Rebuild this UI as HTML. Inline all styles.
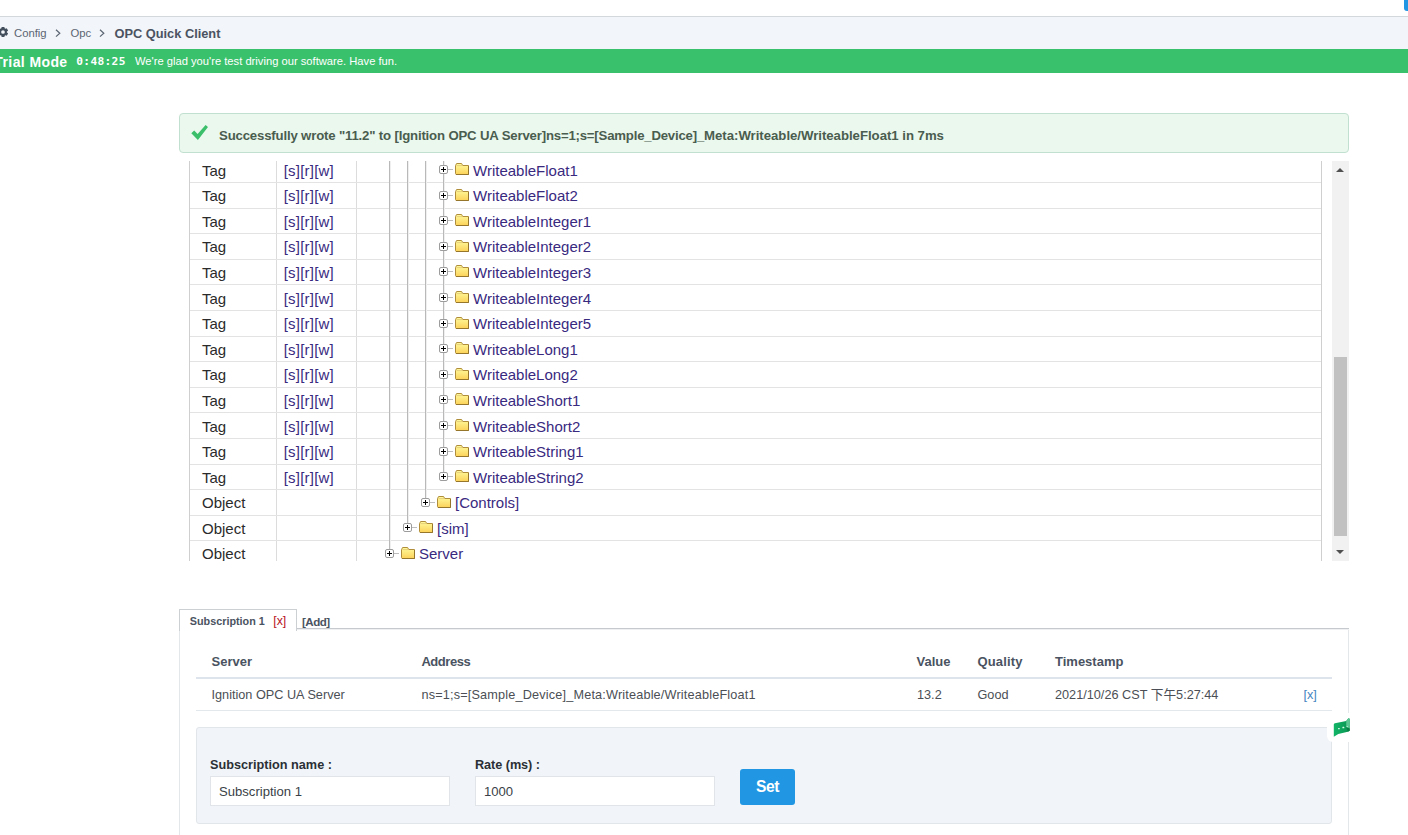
<!DOCTYPE html>
<html lang="en">
<head>
<meta charset="utf-8">
<title>OPC Quick Client</title>
<style>
html,body{margin:0;padding:0;background:#fff;}
body{width:1408px;height:835px;overflow:hidden;position:relative;font-family:"Liberation Sans","Noto Sans CJK SC",sans-serif;color:#323a45;}
.abs{position:absolute;white-space:nowrap;}
/* top */
#topline{left:0;top:16px;width:1408px;height:1px;background:#d3d8dd;}
#crumbs{left:0;top:17px;width:1408px;height:32px;background:#f2f5f9;}
#corner{left:1404px;top:0;width:6px;height:11px;background:#2196e3;border-radius:0 0 0 3px;}
#trial{left:0;top:48.5px;width:1408px;height:24.5px;background:#3ac16c;}
.crumb{font-size:11.3px;color:#5b6573;top:25.8px;line-height:14px;}
.crumbb{font-size:12.8px;font-weight:bold;color:#4b5362;top:25.5px;line-height:16px;}
.sep{top:28.2px;width:6px;height:10px;}
/* alert */
#alert{left:179px;top:113px;width:1168px;height:38px;background:#eaf8ee;border:1px solid #c2e0cf;border-radius:4px;}
#alerttxt{left:219px;top:127.8px;font-size:13.2px;letter-spacing:-.12px;font-weight:bold;color:#4a5d4f;line-height:16px;}
/* tree */
#tree{left:189px;top:161px;width:1133px;height:400px;overflow:hidden;border-left:1px solid #cfcfcf;border-right:1px solid #cfcfcf;box-sizing:border-box;}
.row{position:absolute;left:0;width:1131px;height:24px;border-bottom:1px solid #e3e3e3;}
.row span{position:absolute;top:4px;font-size:15px;line-height:18px;white-space:nowrap;}
.up span{top:3px;}
.c1{left:12px;color:#2b2b2b;}
.c2{left:93.7px;color:#392a80;letter-spacing:.22px;}
.c3{color:#392a80;}
.pb{position:absolute;top:7px;width:7px;height:7px;border:1px solid #9c9c9c;border-radius:2px;background:#fff;z-index:2;}
.pb:before{content:"";position:absolute;left:1px;top:3px;width:5px;height:1px;background:#000;}
.pb:after{content:"";position:absolute;left:3px;top:1px;width:1px;height:5px;background:#000;}
.hd{position:absolute;top:11px;width:5px;height:1px;background:#bdbdbd;}
.fo{position:absolute;top:4px;}
.vl{position:absolute;top:0;width:1px;background:#b9b9b9;box-shadow:1px 0 0 #efefef;}
.cs{position:absolute;top:0;width:1px;height:400px;background:#dcdcdc;}
#sbar{left:1332px;top:161px;width:17px;height:400px;background:#f1f1f1;}
#thumb{left:1334px;top:357px;width:13px;height:179px;background:#c1c1c1;}
.arr{width:0;height:0;border-left:4px solid transparent;border-right:4px solid transparent;}
/* subscriptions */
#tab{left:179px;top:609px;width:116px;height:21px;border:1px solid #cdd0d3;border-bottom:none;background:#fff;}
#tabline{left:296px;top:628px;width:1053px;height:1px;background:#c6c9cd;box-shadow:0 1px 0 #eef0f1;}
#subbox{left:179px;top:630px;width:1168px;height:210px;border-left:1px solid #e4e7ea;border-right:1px solid #e4e7ea;}
.th{font-size:13px;font-weight:bold;color:#4a5361;top:653.8px;line-height:16px;}
.td{font-size:12.7px;color:#4b4f55;top:686.8px;line-height:16px;}
#hline{left:196px;top:677px;width:1136px;height:2px;background:#dde4eb;}
#rline{left:196px;top:710px;width:1136px;height:1px;background:#e3e8ed;}
#panel{left:196px;top:727px;width:1134px;height:95px;background:#f1f5f9;border:1px solid #e1e6ea;border-radius:3px;}
.lbl{font-size:12.7px;font-weight:bold;color:#2b2f36;top:757.4px;line-height:16px;}
.inp{top:776px;height:28px;width:238px;background:#fff;border:1px solid #e1e5e9;font-size:13.1px;color:#3a3f47;line-height:30.2px;text-indent:8px;}
#setbtn{left:740px;top:769px;width:55px;height:35.5px;background:#2196e3;border-radius:3px;color:#fff;font-weight:bold;font-size:15.6px;letter-spacing:-.5px;text-align:center;line-height:36px;}
</style>
</head>
<body>
<div class="abs" id="topline"></div>
<div class="abs" id="crumbs"></div>
<div class="abs" id="corner"></div>
<div class="abs" id="trial"></div>
<!--CRUMBS-->
<svg class="abs" style="left:-3px;top:25.900px" width="12" height="12" viewBox="-6 -6 12 12"><g fill="#434e5c"><circle r="3.900"/><rect x="-1.500" y="-5.100" width="3" height="10.200" rx=".5"/><rect x="-1.500" y="-5.100" width="3" height="10.200" rx=".5" transform="rotate(60)"/><rect x="-1.500" y="-5.100" width="3" height="10.200" rx=".5" transform="rotate(120)"/></g><circle r="1.850" fill="#f2f5f9"/></svg>
<div class="abs crumb" style="left:14px">Config</div>
<svg class="abs sep" style="left:55px" viewBox="0 0 6 10"><path d="M1 1.800l3.800 3.400-3.800 3.400" fill="none" stroke="#5b6573" stroke-width="1.200"/></svg>
<div class="abs crumb" style="left:70.500px">Opc</div>
<svg class="abs sep" style="left:99px" viewBox="0 0 6 10"><path d="M1 1.800l3.800 3.400-3.800 3.400" fill="none" stroke="#5b6573" stroke-width="1.200"/></svg>
<div class="abs crumbb" style="left:114.500px">OPC Quick Client</div>
<div class="abs" id="tm1" style="left:-5.700px;top:53px;font-size:14px;letter-spacing:.4px;font-weight:bold;color:#fff;line-height:18px">Trial Mode</div>
<div class="abs" id="tm2" style="left:76.300px;top:54.500px;font-family:'DejaVu Sans Mono','Liberation Mono',monospace;font-size:11.200px;letter-spacing:.33px;font-weight:bold;color:#fff;line-height:14px">0:48:25</div>
<div class="abs" id="tm3" style="left:135px;top:54px;font-size:11.200px;color:#fff;line-height:14px">We're glad you're test driving our software. Have fun.</div>
<!--/CRUMBS-->
<!--ALERT-->
<div class="abs" id="alert"></div>
<svg class="abs" style="left:190px;top:124px" width="19" height="17" viewBox="0 0 19 17"><path d="M1.300 9.200L4.200 6.600 7.600 10 15.600 1 18 2.900 7.900 16z" fill="#3bbf6a"/></svg>
<div class="abs" id="alerttxt"><span style="letter-spacing:-.17px">Successfully wrote "11.2" to [Ignition OPC UA Server]</span><span style="letter-spacing:-.2px">ns=1;s=[Sample_Device]_</span><span style="letter-spacing:-.02px">Meta:Writeable/WriteableFloat1 in 7ms</span></div>
<!--/ALERT-->
<!--TREE-->
<div class="abs" id="tree">
<div class="cs" style="left:86px"></div>
<div class="cs" style="left:166px"></div>
<div class="row" style="top:-3px"><span class="c1">Tag</span><span class="c2">[s][r][w]</span><i class="pb" style="left:249px"></i><i class="hd" style="left:258px"></i><svg class="fo" style="left:264px" width="16" height="14" viewBox="0 0 16 14"><defs><linearGradient id="g0" x1="0" y1="0" x2="0" y2="1"><stop offset="0" stop-color="#fffb9e"/><stop offset="1" stop-color="#fcd259"/></linearGradient></defs><path d="M1.5 11.6V3.6L2.6 1.5H7.6L8.7 3.5H14.5V12.5H2z" fill="url(#g0)" stroke="#b08d3a" stroke-width="1" stroke-linejoin="round"/><path d="M2.4 3.6H8.4" stroke="#e6cf7a" stroke-width="1" fill="none"/><path d="M14.5 4V12.5H2" stroke="#96762a" stroke-width="1" fill="none" stroke-linejoin="round"/></svg><span class="c3" style="left:283px">WriteableFloat1</span></div>
<div class="row up" style="top:23px"><span class="c1">Tag</span><span class="c2">[s][r][w]</span><i class="pb" style="left:249px"></i><i class="hd" style="left:258px"></i><svg class="fo" style="left:264px" width="16" height="14" viewBox="0 0 16 14"><defs><linearGradient id="g1" x1="0" y1="0" x2="0" y2="1"><stop offset="0" stop-color="#fffb9e"/><stop offset="1" stop-color="#fcd259"/></linearGradient></defs><path d="M1.5 11.6V3.6L2.6 1.5H7.6L8.7 3.5H14.5V12.5H2z" fill="url(#g1)" stroke="#b08d3a" stroke-width="1" stroke-linejoin="round"/><path d="M2.4 3.6H8.4" stroke="#e6cf7a" stroke-width="1" fill="none"/><path d="M14.5 4V12.5H2" stroke="#96762a" stroke-width="1" fill="none" stroke-linejoin="round"/></svg><span class="c3" style="left:283px">WriteableFloat2</span></div>
<div class="row" style="top:48px"><span class="c1">Tag</span><span class="c2">[s][r][w]</span><i class="pb" style="left:249px"></i><i class="hd" style="left:258px"></i><svg class="fo" style="left:264px" width="16" height="14" viewBox="0 0 16 14"><defs><linearGradient id="g2" x1="0" y1="0" x2="0" y2="1"><stop offset="0" stop-color="#fffb9e"/><stop offset="1" stop-color="#fcd259"/></linearGradient></defs><path d="M1.5 11.6V3.6L2.6 1.5H7.6L8.7 3.5H14.5V12.5H2z" fill="url(#g2)" stroke="#b08d3a" stroke-width="1" stroke-linejoin="round"/><path d="M2.4 3.6H8.4" stroke="#e6cf7a" stroke-width="1" fill="none"/><path d="M14.5 4V12.5H2" stroke="#96762a" stroke-width="1" fill="none" stroke-linejoin="round"/></svg><span class="c3" style="left:283px">WriteableInteger1</span></div>
<div class="row up" style="top:74px"><span class="c1">Tag</span><span class="c2">[s][r][w]</span><i class="pb" style="left:249px"></i><i class="hd" style="left:258px"></i><svg class="fo" style="left:264px" width="16" height="14" viewBox="0 0 16 14"><defs><linearGradient id="g3" x1="0" y1="0" x2="0" y2="1"><stop offset="0" stop-color="#fffb9e"/><stop offset="1" stop-color="#fcd259"/></linearGradient></defs><path d="M1.5 11.6V3.6L2.6 1.5H7.6L8.7 3.5H14.5V12.5H2z" fill="url(#g3)" stroke="#b08d3a" stroke-width="1" stroke-linejoin="round"/><path d="M2.4 3.6H8.4" stroke="#e6cf7a" stroke-width="1" fill="none"/><path d="M14.5 4V12.5H2" stroke="#96762a" stroke-width="1" fill="none" stroke-linejoin="round"/></svg><span class="c3" style="left:283px">WriteableInteger2</span></div>
<div class="row" style="top:99px"><span class="c1">Tag</span><span class="c2">[s][r][w]</span><i class="pb" style="left:249px"></i><i class="hd" style="left:258px"></i><svg class="fo" style="left:264px" width="16" height="14" viewBox="0 0 16 14"><defs><linearGradient id="g4" x1="0" y1="0" x2="0" y2="1"><stop offset="0" stop-color="#fffb9e"/><stop offset="1" stop-color="#fcd259"/></linearGradient></defs><path d="M1.5 11.6V3.6L2.6 1.5H7.6L8.7 3.5H14.5V12.5H2z" fill="url(#g4)" stroke="#b08d3a" stroke-width="1" stroke-linejoin="round"/><path d="M2.4 3.6H8.4" stroke="#e6cf7a" stroke-width="1" fill="none"/><path d="M14.5 4V12.5H2" stroke="#96762a" stroke-width="1" fill="none" stroke-linejoin="round"/></svg><span class="c3" style="left:283px">WriteableInteger3</span></div>
<div class="row" style="top:125px"><span class="c1">Tag</span><span class="c2">[s][r][w]</span><i class="pb" style="left:249px"></i><i class="hd" style="left:258px"></i><svg class="fo" style="left:264px" width="16" height="14" viewBox="0 0 16 14"><defs><linearGradient id="g5" x1="0" y1="0" x2="0" y2="1"><stop offset="0" stop-color="#fffb9e"/><stop offset="1" stop-color="#fcd259"/></linearGradient></defs><path d="M1.5 11.6V3.6L2.6 1.5H7.6L8.7 3.5H14.5V12.5H2z" fill="url(#g5)" stroke="#b08d3a" stroke-width="1" stroke-linejoin="round"/><path d="M2.4 3.6H8.4" stroke="#e6cf7a" stroke-width="1" fill="none"/><path d="M14.5 4V12.5H2" stroke="#96762a" stroke-width="1" fill="none" stroke-linejoin="round"/></svg><span class="c3" style="left:283px">WriteableInteger4</span></div>
<div class="row up" style="top:151px"><span class="c1">Tag</span><span class="c2">[s][r][w]</span><i class="pb" style="left:249px"></i><i class="hd" style="left:258px"></i><svg class="fo" style="left:264px" width="16" height="14" viewBox="0 0 16 14"><defs><linearGradient id="g6" x1="0" y1="0" x2="0" y2="1"><stop offset="0" stop-color="#fffb9e"/><stop offset="1" stop-color="#fcd259"/></linearGradient></defs><path d="M1.5 11.6V3.6L2.6 1.5H7.6L8.7 3.5H14.5V12.5H2z" fill="url(#g6)" stroke="#b08d3a" stroke-width="1" stroke-linejoin="round"/><path d="M2.4 3.6H8.4" stroke="#e6cf7a" stroke-width="1" fill="none"/><path d="M14.5 4V12.5H2" stroke="#96762a" stroke-width="1" fill="none" stroke-linejoin="round"/></svg><span class="c3" style="left:283px">WriteableInteger5</span></div>
<div class="row" style="top:176px"><span class="c1">Tag</span><span class="c2">[s][r][w]</span><i class="pb" style="left:249px"></i><i class="hd" style="left:258px"></i><svg class="fo" style="left:264px" width="16" height="14" viewBox="0 0 16 14"><defs><linearGradient id="g7" x1="0" y1="0" x2="0" y2="1"><stop offset="0" stop-color="#fffb9e"/><stop offset="1" stop-color="#fcd259"/></linearGradient></defs><path d="M1.5 11.6V3.6L2.6 1.5H7.6L8.7 3.5H14.5V12.5H2z" fill="url(#g7)" stroke="#b08d3a" stroke-width="1" stroke-linejoin="round"/><path d="M2.4 3.6H8.4" stroke="#e6cf7a" stroke-width="1" fill="none"/><path d="M14.5 4V12.5H2" stroke="#96762a" stroke-width="1" fill="none" stroke-linejoin="round"/></svg><span class="c3" style="left:283px">WriteableLong1</span></div>
<div class="row up" style="top:202px"><span class="c1">Tag</span><span class="c2">[s][r][w]</span><i class="pb" style="left:249px"></i><i class="hd" style="left:258px"></i><svg class="fo" style="left:264px" width="16" height="14" viewBox="0 0 16 14"><defs><linearGradient id="g8" x1="0" y1="0" x2="0" y2="1"><stop offset="0" stop-color="#fffb9e"/><stop offset="1" stop-color="#fcd259"/></linearGradient></defs><path d="M1.5 11.6V3.6L2.6 1.5H7.6L8.7 3.5H14.5V12.5H2z" fill="url(#g8)" stroke="#b08d3a" stroke-width="1" stroke-linejoin="round"/><path d="M2.4 3.6H8.4" stroke="#e6cf7a" stroke-width="1" fill="none"/><path d="M14.5 4V12.5H2" stroke="#96762a" stroke-width="1" fill="none" stroke-linejoin="round"/></svg><span class="c3" style="left:283px">WriteableLong2</span></div>
<div class="row" style="top:227px"><span class="c1">Tag</span><span class="c2">[s][r][w]</span><i class="pb" style="left:249px"></i><i class="hd" style="left:258px"></i><svg class="fo" style="left:264px" width="16" height="14" viewBox="0 0 16 14"><defs><linearGradient id="g9" x1="0" y1="0" x2="0" y2="1"><stop offset="0" stop-color="#fffb9e"/><stop offset="1" stop-color="#fcd259"/></linearGradient></defs><path d="M1.5 11.6V3.6L2.6 1.5H7.6L8.7 3.5H14.5V12.5H2z" fill="url(#g9)" stroke="#b08d3a" stroke-width="1" stroke-linejoin="round"/><path d="M2.4 3.6H8.4" stroke="#e6cf7a" stroke-width="1" fill="none"/><path d="M14.5 4V12.5H2" stroke="#96762a" stroke-width="1" fill="none" stroke-linejoin="round"/></svg><span class="c3" style="left:283px">WriteableShort1</span></div>
<div class="row" style="top:253px"><span class="c1">Tag</span><span class="c2">[s][r][w]</span><i class="pb" style="left:249px"></i><i class="hd" style="left:258px"></i><svg class="fo" style="left:264px" width="16" height="14" viewBox="0 0 16 14"><defs><linearGradient id="g10" x1="0" y1="0" x2="0" y2="1"><stop offset="0" stop-color="#fffb9e"/><stop offset="1" stop-color="#fcd259"/></linearGradient></defs><path d="M1.5 11.6V3.6L2.6 1.5H7.6L8.7 3.5H14.5V12.5H2z" fill="url(#g10)" stroke="#b08d3a" stroke-width="1" stroke-linejoin="round"/><path d="M2.4 3.6H8.4" stroke="#e6cf7a" stroke-width="1" fill="none"/><path d="M14.5 4V12.5H2" stroke="#96762a" stroke-width="1" fill="none" stroke-linejoin="round"/></svg><span class="c3" style="left:283px">WriteableShort2</span></div>
<div class="row up" style="top:279px"><span class="c1">Tag</span><span class="c2">[s][r][w]</span><i class="pb" style="left:249px"></i><i class="hd" style="left:258px"></i><svg class="fo" style="left:264px" width="16" height="14" viewBox="0 0 16 14"><defs><linearGradient id="g11" x1="0" y1="0" x2="0" y2="1"><stop offset="0" stop-color="#fffb9e"/><stop offset="1" stop-color="#fcd259"/></linearGradient></defs><path d="M1.5 11.6V3.6L2.6 1.5H7.6L8.7 3.5H14.5V12.5H2z" fill="url(#g11)" stroke="#b08d3a" stroke-width="1" stroke-linejoin="round"/><path d="M2.4 3.6H8.4" stroke="#e6cf7a" stroke-width="1" fill="none"/><path d="M14.5 4V12.5H2" stroke="#96762a" stroke-width="1" fill="none" stroke-linejoin="round"/></svg><span class="c3" style="left:283px">WriteableString1</span></div>
<div class="row" style="top:304px"><span class="c1">Tag</span><span class="c2">[s][r][w]</span><i class="pb" style="left:249px"></i><i class="hd" style="left:258px"></i><svg class="fo" style="left:264px" width="16" height="14" viewBox="0 0 16 14"><defs><linearGradient id="g12" x1="0" y1="0" x2="0" y2="1"><stop offset="0" stop-color="#fffb9e"/><stop offset="1" stop-color="#fcd259"/></linearGradient></defs><path d="M1.5 11.6V3.6L2.6 1.5H7.6L8.7 3.5H14.5V12.5H2z" fill="url(#g12)" stroke="#b08d3a" stroke-width="1" stroke-linejoin="round"/><path d="M2.4 3.6H8.4" stroke="#e6cf7a" stroke-width="1" fill="none"/><path d="M14.5 4V12.5H2" stroke="#96762a" stroke-width="1" fill="none" stroke-linejoin="round"/></svg><span class="c3" style="left:283px">WriteableString2</span></div>
<div class="row up" style="top:330px"><span class="c1">Object</span><i class="pb" style="left:231px"></i><i class="hd" style="left:240px"></i><svg class="fo" style="left:246px" width="16" height="14" viewBox="0 0 16 14"><defs><linearGradient id="g13" x1="0" y1="0" x2="0" y2="1"><stop offset="0" stop-color="#fffb9e"/><stop offset="1" stop-color="#fcd259"/></linearGradient></defs><path d="M1.5 11.6V3.6L2.6 1.5H7.6L8.7 3.5H14.5V12.5H2z" fill="url(#g13)" stroke="#b08d3a" stroke-width="1" stroke-linejoin="round"/><path d="M2.4 3.6H8.4" stroke="#e6cf7a" stroke-width="1" fill="none"/><path d="M14.5 4V12.5H2" stroke="#96762a" stroke-width="1" fill="none" stroke-linejoin="round"/></svg><span class="c3" style="left:265px">[Controls]</span></div>
<div class="row" style="top:355px"><span class="c1">Object</span><i class="pb" style="left:213px"></i><i class="hd" style="left:222px"></i><svg class="fo" style="left:228px" width="16" height="14" viewBox="0 0 16 14"><defs><linearGradient id="g14" x1="0" y1="0" x2="0" y2="1"><stop offset="0" stop-color="#fffb9e"/><stop offset="1" stop-color="#fcd259"/></linearGradient></defs><path d="M1.5 11.6V3.6L2.6 1.5H7.6L8.7 3.5H14.5V12.5H2z" fill="url(#g14)" stroke="#b08d3a" stroke-width="1" stroke-linejoin="round"/><path d="M2.4 3.6H8.4" stroke="#e6cf7a" stroke-width="1" fill="none"/><path d="M14.5 4V12.5H2" stroke="#96762a" stroke-width="1" fill="none" stroke-linejoin="round"/></svg><span class="c3" style="left:247px">[sim]</span></div>
<div class="row up" style="top:381px"><span class="c1">Object</span><i class="pb" style="left:195px"></i><i class="hd" style="left:204px"></i><svg class="fo" style="left:210px" width="16" height="14" viewBox="0 0 16 14"><defs><linearGradient id="g15" x1="0" y1="0" x2="0" y2="1"><stop offset="0" stop-color="#fffb9e"/><stop offset="1" stop-color="#fcd259"/></linearGradient></defs><path d="M1.5 11.6V3.6L2.6 1.5H7.6L8.7 3.5H14.5V12.5H2z" fill="url(#g15)" stroke="#b08d3a" stroke-width="1" stroke-linejoin="round"/><path d="M2.4 3.6H8.4" stroke="#e6cf7a" stroke-width="1" fill="none"/><path d="M14.5 4V12.5H2" stroke="#96762a" stroke-width="1" fill="none" stroke-linejoin="round"/></svg><span class="c3" style="left:229px">Server</span></div>
<div class="vl" style="left:199px;height:388.0px"></div>
<div class="vl" style="left:217px;height:362.0px"></div>
<div class="vl" style="left:235px;height:337.0px"></div>
<div class="vl" style="left:253px;height:311.0px"></div>
</div>
<!--/TREE-->
<!--SUBS-->
<div class="abs" id="sbar"></div>
<div class="abs" id="thumb"></div>
<div class="abs arr" style="left:1336.200px;top:167.800px;border-bottom:4px solid #505050"></div>
<div class="abs arr" style="left:1336.200px;top:549.800px;border-top:4px solid #505050"></div>
<div class="abs" id="subbox"></div>
<div class="abs" id="tabline"></div>
<div class="abs" id="tab"></div>
<div class="abs" style="left:189.800px;top:614px;font-size:10.800px;font-weight:bold;color:#4a5361;line-height:14px">Subscription 1</div>
<div class="abs" style="left:273.200px;top:613.800px;font-size:12.400px;color:#b81424;line-height:14px">[x]</div>
<div class="abs" style="left:302px;top:615px;font-size:11.600px;letter-spacing:-.55px;font-weight:bold;color:#4a5361;line-height:14px">[Add]</div>
<div class="abs th" style="left:211.500px">Server</div>
<div class="abs th" style="left:421.400px;letter-spacing:-.44px">Address</div>
<div class="abs th" style="left:916.500px">Value</div>
<div class="abs th" style="left:977.500px;letter-spacing:.14px">Quality</div>
<div class="abs th" style="left:1055px">Timestamp</div>
<div class="abs" id="hline"></div>
<div class="abs td" style="left:211.500px">Ignition OPC UA Server</div>
<div class="abs td" style="left:421.500px;letter-spacing:.166px">ns=1;s=[Sample_Device]_Meta:Writeable/WriteableFloat1</div>
<div class="abs td" style="left:917px">13.2</div>
<div class="abs td" style="left:977.500px">Good</div>
<div class="abs td" style="left:1055px">2021/10/26 CST 下午5:27:44</div>
<div class="abs td" style="left:1303.500px;color:#4585c1">[x]</div>
<div class="abs" id="rline"></div>
<div class="abs" id="panel"></div>
<div class="abs lbl" style="left:210px">Subscription name :</div>
<div class="abs lbl" style="left:475px;letter-spacing:-.06px">Rate (ms) :</div>
<div class="abs inp" style="left:210px">Subscription 1</div>
<div class="abs inp" style="left:475px">1000</div>
<div class="abs" id="setbtn">Set</div>
<div class="abs" style="left:1327px;top:713px;width:30px;height:29px;background:#fff;border-radius:6px"></div>
<svg class="abs" style="left:1332px;top:716px" width="22" height="24" viewBox="0 0 22 24"><defs><linearGradient id="cg" x1="0" y1="0" x2="1" y2="0"><stop offset="0" stop-color="#12b567"/><stop offset="1" stop-color="#0b9452"/></linearGradient></defs><path d="M1.800 8.600Q1.800 7.500 2.900 7.200L14.200 4.900 16.400 2.300 17.700 2.700V14.800L15.800 15.800 6.300 18 1.800 20.800z" fill="url(#cg)"/><path d="M14.200 4.900L16.400 2.300 17.700 2.700V12.600L14.200 10.800z" fill="#5cc793"/><path d="M14.200 11L17.700 12.600V14.800L15.800 15.800z" fill="#0a7f45"/><rect x="6" y="11.900" width="1.800" height="1.300" rx=".5" fill="#d8fbe8"/><rect x="10.400" y="10.800" width="1.900" height="1.500" rx=".5" fill="#d8fbe8"/><rect x="14.600" y="9.900" width="1.300" height="1.300" rx=".5" fill="#b8f0d2"/></svg>
<!--/SUBS-->
</body>
</html>
